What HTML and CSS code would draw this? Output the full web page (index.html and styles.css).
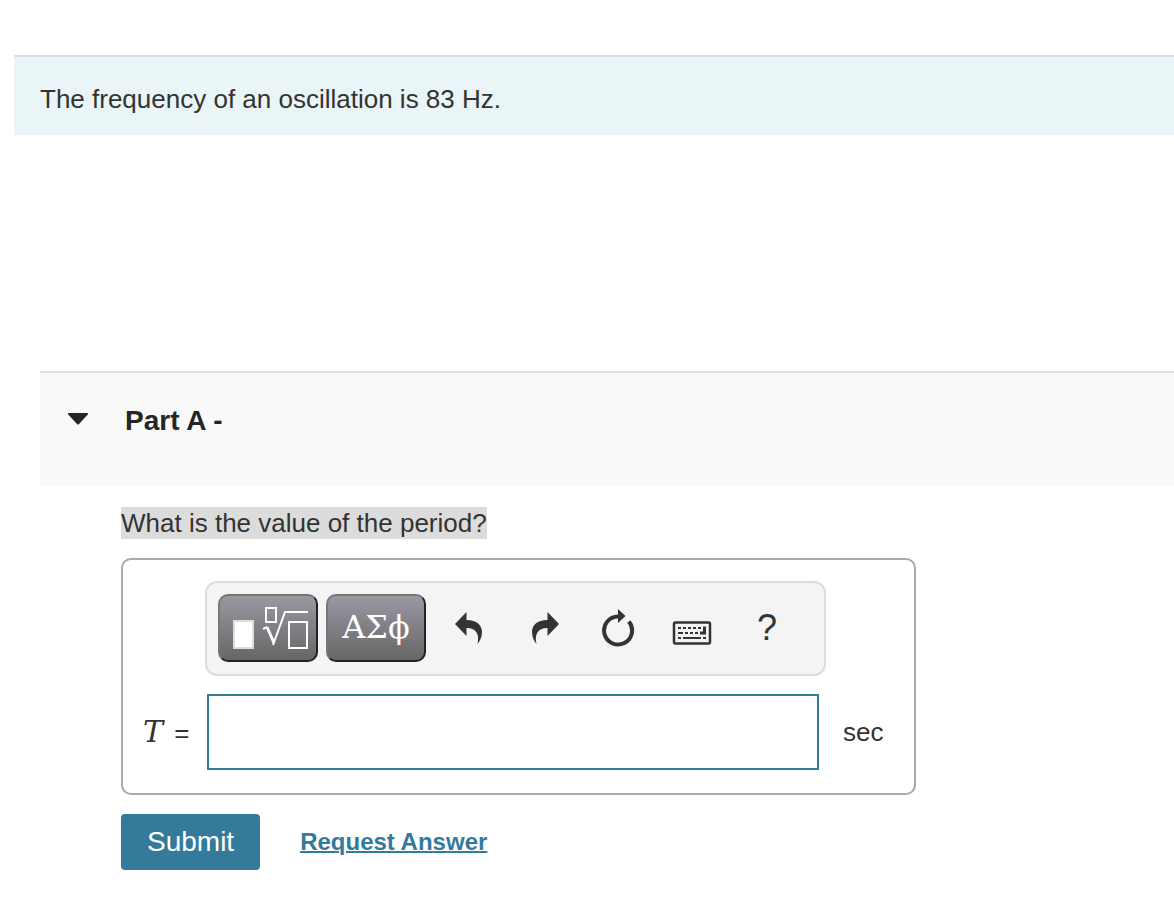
FILE: index.html
```html
<!DOCTYPE html>
<html lang="en">
<head>
  <meta charset="UTF-8" />
  <meta name="viewport" content="width=device-width, initial-scale=1.0"/>
  <title>Part A</title>
  <link rel="stylesheet" href="styles.css">
</head>
<body>
  <main class="problem">
    <div class="intro">The frequency of an oscillation is 83 Hz.</div>

    <section class="part">
      <header class="part-header">
        <button class="toggle" type="button" aria-label="Collapse Part A">
          <svg width="22" height="14" viewBox="0 0 22 14"><path d="M1.500 1h19q1 .5.3 1.500L12 12q-1 1-2 0L1.200 2.500Q.5 1.500 1.500 1z" fill="#252525"/></svg>
        </button>
        <h2>Part A -</h2>
      </header>

      <form class="part-body">
        <p class="question"><span class="selected">What is the value of the period?</span></p>

        <div class="answer-box">
          <div class="toolbar">
            <button class="palette" type="button" aria-label="Templates">
              <svg width="82" height="44" viewBox="-6 -1 82 44" fill="none" stroke="#fff" stroke-width="2">
                <path d="M1 14h19v27H1z" fill="#fff" stroke="#ddd"/>
                <path d="M33 1h10v14H33z"/>
                <path d="M56 15h18v26H56z"/>
                <path d="M30 22l4-2"/>
                <path d="M34 20l7 16" stroke-width="3"/>
                <path d="M40 38L52 5h23"/>
              </svg>
            </button>
            <button class="palette symbols" type="button">ΑΣϕ</button>
            <div class="tools">
              <button class="tool" type="button" aria-label="Undo">
                <svg width="32" height="32" viewBox="0 0 32 32"><path d="M0 12L11.500 0v8C22 8 27 13 27 20c0 5-2 9-4.500 12C24.500 23 22 16 11.500 16v8z" fill="#333"/></svg>
              </button>
              <button class="tool" type="button" aria-label="Redo">
                <svg width="28" height="32" viewBox="0 0 28 32"><path d="M28 12L16.500 0v8C6 8 1 13 1 20c0 5 2 9 4.500 12C3.500 23 6 16 16.500 16v8z" fill="#333"/></svg>
              </button>
              <button class="tool" type="button" aria-label="Reset">
                <svg width="36" height="38" viewBox="0 0 36 38"><path d="M27.800 12.500A14 14 0 1 1 17 7.500" fill="none" stroke="#333" stroke-width="4"/><path d="M17 0l7.500 7L17 14z" fill="#333"/></svg>
              </button>
              <button class="tool" type="button" aria-label="Keyboard shortcuts">
                <svg class="keyboard" width="42" height="24" viewBox="0 0 42 24">
                  <rect x="2" y="1.500" width="36" height="21" rx="1.500" fill="none" stroke="#333" stroke-width="2.500"/>
                  <path d="M6 7h3M11 7h3M16 7h3M21 7h3M26 7h3M6 12h5M13 12h3M18 12h3M23 12h3M6 17h3M11 17h18M31 17h3" stroke="#333" stroke-width="2.200"/>
                  <path d="M32.500 5.500V12H28" fill="none" stroke="#333" stroke-width="3"/>
                </svg>
              </button>
              <button class="tool help" type="button" aria-label="Help">?</button>
            </div>
          </div>

          <label class="variable" for="answer"><i>T</i> =</label>
          <input class="answer" id="answer" type="text" autocomplete="off">
          <span class="unit">sec</span>
        </div>

        <div class="actions">
          <button class="submit" type="submit">Submit</button>
          <a class="request" href="#">Request Answer</a>
        </div>
      </form>
    </section>
  </main>
</body>
</html>
```

FILE: styles.css
```css
* {
  box-sizing: border-box;
}

body {
  margin: 0;
  background: #fff;
  color: #333;
  font-family: "Liberation Sans", Arial, sans-serif;
  font-size: 26px;
  line-height: 32px;
}

button,
input {
  font-family: inherit;
  color: inherit;
}

button {
  padding: 0;
  cursor: pointer;
}

svg {
  display: block;
}

.problem {
  padding: 55px 0 36px 14px;
}

.intro {
  padding: 26px 26px 20px;
  border-top: 2px solid #dcdddd;
  background: #e9f5f7;
}

.part {
  margin: 236px 0 0 26px;
}

.part-header {
  display: flex;
  align-items: flex-start;
  gap: 36px;
  padding: 32px 27px 49px;
  border-top: 2px solid #dedede;
  background: #f9f9f9;
}

.part-header h2 {
  margin: 0;
  color: #252525;
  font-size: 28px;
  line-height: 32px;
}

.toggle {
  display: flex;
  align-items: center;
  height: 28px;
  border: none;
  background: none;
}

.part-body {
  padding: 21px 24px 0 81px;
}

.question {
  margin: 0 0 19px;
}

.selected {
  display: inline-block;
  background: #dcdcdc;
}

.answer-box {
  display: grid;
  grid-template-columns: 82px 1fr 88px;
  row-gap: 18px;
  align-items: center;
  max-width: 795px;
  padding: 21px 0 23px;
  border: 2px solid #a9a9a9;
  border-radius: 10px;
}

.toolbar {
  grid-column: 2;
  display: flex;
  gap: 8px;
  padding: 11px 11px 12px;
  border: 2px solid #dcdcdc;
  border-radius: 12px;
  background: #f4f4f4;
}

.palette {
  display: flex;
  align-items: center;
  justify-content: center;
  width: 100px;
  height: 68px;
  border: 2px solid;
  border-color: #777 #222 #222 #777;
  border-radius: 10px;
  background: linear-gradient(#9b98a3, #666);
  color: #fff;
}

.symbols {
  padding-bottom: 2px;
  font-family: "DejaVu Serif", serif;
  font-size: 32px;
}

.tools {
  display: flex;
}

.tool {
  display: flex;
  align-items: center;
  justify-content: center;
  width: 74px;
  border: none;
  background: none;
}

.keyboard {
  margin-top: 10px;
}

.help {
  font-size: 36px;
}

.variable {
  grid-column: 1;
  padding-left: 20px;
  white-space: nowrap;
}

.variable i {
  margin-right: 4px;
  font-family: "DejaVu Serif", serif;
  font-size: 30px;
}

.answer {
  width: auto;
  height: 76px;
  margin: 0 7px 0 2px;
  padding: 0 12px;
  border: 2px solid #337a9b;
  border-radius: 0;
  background: #fff;
  font-size: 26px;
}

.unit {
  padding-left: 17px;
}

.actions {
  display: flex;
  align-items: center;
  gap: 40px;
  margin-top: 19px;
}

.submit {
  height: 56px;
  padding: 0 26px;
  border: none;
  border-radius: 4px;
  background: #337a9b;
  color: #fff;
  font-size: 28px;
}

.request {
  color: #337a9b;
  font-size: 24px;
  font-weight: bold;
  text-decoration-thickness: 2px;
}
```
